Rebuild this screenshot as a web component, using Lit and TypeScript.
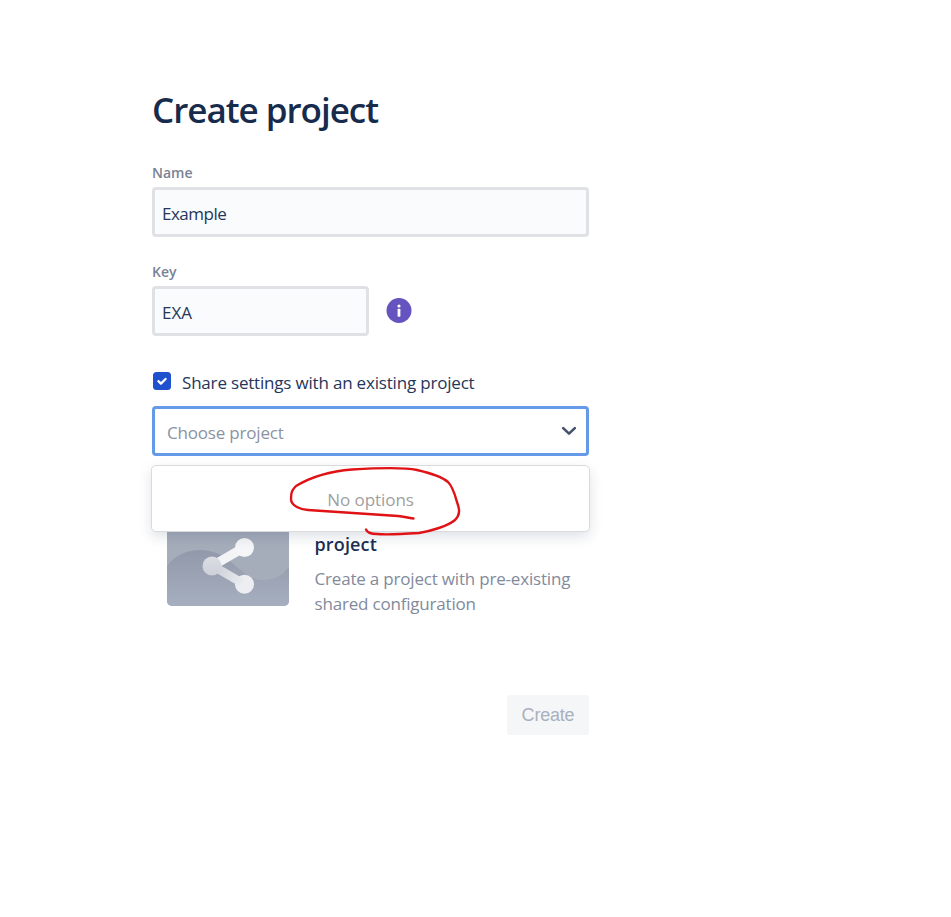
import { LitElement, html, css } from "lit";
import { customElement } from "lit/decorators.js";

@customElement("app-root")
export class AppRoot extends LitElement {
  static styles = css`
    :host { display: block; min-height: 917px; background: #fff; color: #25365a;
      font-family: "Open Sans", "Noto Sans", sans-serif; font-size: 17px; letter-spacing: -0.19px; overflow: hidden; }
    * { box-sizing: border-box; }
    svg { display: block; }
    .form { width: 437px; margin-left: 152px; padding-top: 86px; display: flex; flex-direction: column; }
    h1 { margin: 0; height: 48px; line-height: 48px; font-size: 35px; font-weight: 600; letter-spacing: -1.02px; white-space: nowrap; color: #172b4d; }
    .label { height: 20px; line-height: 20px; font-size: 14px; font-weight: 600; letter-spacing: 0; color: #7a8296; margin-top: 29px; }
    .field { height: 50px; margin-top: 4px; border: 3px solid #dfe1e5; border-radius: 4px; background: #fafbfd;
      padding: 2px 7px 0; line-height: 43px; letter-spacing: -0.5px; white-space: nowrap; }
    .key-row { display: flex; align-items: center; gap: 17px; }
    .key-row .field { width: 217px; letter-spacing: 0; }
    .info { margin-top: 4px; }
    .label.key { margin-top: 25px; }
    .check { display: flex; height: 24px; margin-top: 34px; gap: 11px; white-space: nowrap; line-height: 25px; padding-left: 1px; }
    .check svg { margin-top: 2px; }
    .select { height: 50px; margin-top: 12px; border: 3px solid #659ae8; border-radius: 4px; display: flex;
      justify-content: space-between; padding: 2px 9px 0 12px; line-height: 43px; color: #8b92a2; position: relative; }
    .chev { margin-top: 12px; }
    .menu { position: absolute; top: 56px; left: -4px; width: 439px; height: 67px; background: #fff; border: 1px solid #d9dade;
      border-radius: 5px; box-shadow: 0 5px 13px rgba(9,30,66,.13); text-align: center; line-height: 67px; letter-spacing: -0.05px; color: #a0a0a0; z-index: 1; }
    .mark { position: absolute; left: 132px; top: -6px; }
    .card { display: flex; height: 110px; margin-top: 50px; padding-left: 15px; gap: 25px; }
    .copy { padding-top: 26px; padding-left: 0.5px; white-space: nowrap; }
    .name { height: 24px; line-height: 24px; font-size: 18px; font-weight: 600; letter-spacing: 0.15px; color: #1d2f52; }
    .desc { margin-top: 10px; line-height: 25px; color: #828a9b; }
    .thumb { margin-top: 8px; }
    .create { align-self: flex-end; width: 82px; height: 40px; margin-top: 79px; border: 0; border-radius: 3px; padding: 0;
      background: #f5f6f8; color: #a9b0bd; font: 18px "Liberation Sans", sans-serif; letter-spacing: -0.2px; }
  `;

  render() {
    return html`
      <main class="form">
        <h1>Create project</h1>
        <div class="label">Name</div>
        <div class="field">Example</div>
        <div class="label key">Key</div>
        <div class="key-row">
          <div class="field">EXA</div>
          <svg class="info" width="26" height="26" viewBox="0 0 26 26">
            <circle cx="13" cy="12.500" r="12.500" fill="#6554c0"/>
            <circle cx="13" cy="8" r="1.600" fill="#fff"/>
            <rect x="11.600" y="10.700" width="2.800" height="8" rx=".7" fill="#fff"/>
          </svg>
        </div>
        <div class="check">
          <svg width="18" height="18" viewBox="0 0 18 18">
            <rect width="18" height="18" rx="3.500" fill="#1f50cd"/>
            <path d="M5.400 9.200l2.500 2.400 4.700-4.600" fill="none" stroke="#fff" stroke-width="2.300" stroke-linecap="round" stroke-linejoin="round"/>
          </svg>
          <span>Share settings with an existing project</span>
        </div>
        <div class="select">
          <span>Choose project</span>
          <svg class="chev" width="16" height="16" viewBox="0 0 16 16">
            <path d="M2.200 5.100l5.800 5.500 5.800-5.500" fill="none" stroke="#44516c" stroke-width="2.600" stroke-linecap="round" stroke-linejoin="round"/>
          </svg>
          <div class="menu">
            <span>No options</span>
            <svg class="mark" width="180" height="86" viewBox="284 460 180 86">
              <path d="M413.500 518.500C407 518 405 516.500 398 516C376 514.500 336 512 308 510C301 509.500 291 506 291 499C291 492 292 490 296 486C311 477 332 471 352 469.500C376 468 406 467.500 417 470C430 473 441 476 448 482C453 487 455 495 457 502C460 510 460 515 455 520C448 526 431 531 419 533C404 534 386 535 377 534C371 534 367 532 366 529.500" fill="none" stroke="#e01216" stroke-width="2.400" stroke-linecap="round" stroke-linejoin="round"/>
            </svg>
          </div>
        </div>
        <section class="card">
          <svg class="thumb" width="122" height="92" viewBox="0 0 122 92">
            <defs>
              <linearGradient id="wave" x1="0" y1="0" x2="0" y2="1"><stop stop-color="#9299aa"/><stop offset="1" stop-color="#a6afbf"/></linearGradient>
              <linearGradient id="arm" gradientUnits="userSpaceOnUse" x1="45" y1="51" x2="77" y2="70"><stop stop-color="#c9ccd5"/><stop offset="1" stop-color="#eceef1"/></linearGradient>
              <linearGradient id="node" x1="0" y1="0" x2="0" y2="1"><stop stop-color="#dcdee4"/><stop offset="1" stop-color="#cdd0d8"/></linearGradient>
              <clipPath id="frame"><rect y="-6" width="122" height="98" rx="5"/></clipPath>
            </defs>
            <g clip-path="url(#frame)">
              <rect width="122" height="92" fill="#a5adba"/>
              <path d="M0 52C13 34 39 31 59 44C74 55 80 66 97 66C108 66 116 61 122 53V92H0Z" fill="url(#wave)"/>
              <path d="M46 51.500L77 33.500" stroke="#f3f4f6" stroke-width="9"/>
              <circle cx="77.500" cy="33.500" r="9.500" fill="#f5f6f8"/>
              <circle cx="77.500" cy="70.300" r="9.500" fill="#eceef1"/>
              <path d="M46 52L77 70" stroke="url(#arm)" stroke-width="8.500"/>
              <circle cx="45" cy="52" r="9.500" fill="url(#node)"/>
            </g>
          </svg>
          <div class="copy">
            <div class="name">project</div>
            <div class="desc">Create a project with pre-existing<br>shared configuration</div>
          </div>
        </section>
        <button class="create" disabled>Create</button>
      </main>
    `;
  }
}
